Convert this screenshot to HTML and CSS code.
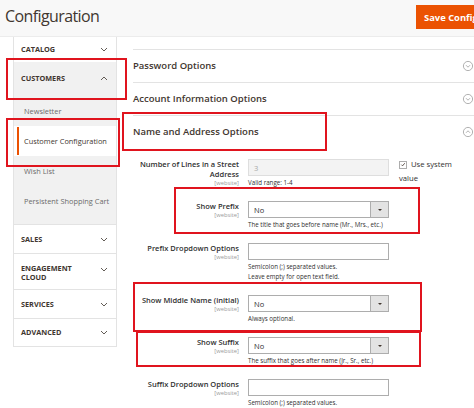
FILE: index.html
```html
<!DOCTYPE html>
<html lang="en">
<head>
<meta charset="utf-8">
<title>Configuration</title>
<link rel="stylesheet" href="styles.css">
</head>
<body>
<div class="page">
  <header class="top">
    <h1 class="title">Configuration</h1>
    <button class="save" type="button">Save Config</button>
  </header>
  <div class="layout">
    <nav class="side">
      <div class="tab tab-first"><span class="tab-label">CATALOG</span><svg class="chev" viewBox="0 0 8 5"><path d="M1 1 L4 4 L7 1"/></svg></div>
      <div class="group">
        <div class="tab tab-open"><span class="tab-label">CUSTOMERS</span><svg class="chev" viewBox="0 0 8 5"><path d="M1 4 L4 1 L7 4"/></svg></div>
        <ul class="sub">
          <li class="sub-item"><span class="sub-link">Newsletter</span></li>
          <li class="sub-item active"><span class="sub-link">Customer Configuration</span></li>
          <li class="sub-item"><span class="sub-link">Wish List</span></li>
          <li class="sub-item"><span class="sub-link">Persistent Shopping Cart</span></li>
        </ul>
      </div>
      <div class="tab"><span class="tab-label">SALES</span><svg class="chev" viewBox="0 0 8 5"><path d="M1 1 L4 4 L7 1"/></svg></div>
      <div class="tab tab-tall"><span class="tab-label">ENGAGEMENT<br>CLOUD</span><svg class="chev chev-top" viewBox="0 0 8 5"><path d="M1 1 L4 4 L7 1"/></svg></div>
      <div class="tab"><span class="tab-label">SERVICES</span><svg class="chev" viewBox="0 0 8 5"><path d="M1 1 L4 4 L7 1"/></svg></div>
      <div class="tab tab-last"><span class="tab-label">ADVANCED</span><svg class="chev" viewBox="0 0 8 5"><path d="M1 1 L4 4 L7 1"/></svg></div>
    </nav>
    <main class="main">
      <section class="sec">
        <div class="sec-head"><span>Password Options</span><svg class="circ" viewBox="0 0 12 12"><circle cx="6" cy="6" r="4.6"/><path d="M4 5.2 L6 7.2 L8 5.2"/></svg></div>
      </section>
      <section class="sec">
        <div class="sec-head"><span>Account Information Options</span><svg class="circ" viewBox="0 0 12 12"><circle cx="6" cy="6" r="4.6"/><path d="M4 5.2 L6 7.2 L8 5.2"/></svg></div>
      </section>
      <section class="sec sec-open">
        <div class="sec-head"><span>Name and Address Options</span><svg class="circ" viewBox="0 0 12 12"><circle cx="6" cy="6" r="4.6"/><path d="M4 6.8 L6 4.8 L8 6.8"/></svg></div>
        <div class="fields">
          <div class="row">
            <div class="label">Number of Lines in a Street<br>Address<span class="scope">[website]</span></div>
            <div class="ctl">
              <div class="input disabled">3</div>
              <div class="note">Valid range: 1-4</div>
            </div>
            <div class="usesys"><span class="cb"><svg viewBox="0 0 8 8"><path d="M1.8 4.2 L3.4 5.8 L6.3 2.3"/></svg></span>Use system value</div>
          </div>
          <div class="row">
            <div class="label">Show Prefix<span class="scope">[website]</span></div>
            <div class="ctl">
              <div class="select"><span class="sel-val">No</span><span class="sel-btn"><i class="tri"></i></span></div>
              <div class="note">The title that goes before name (Mr., Mrs., etc.)</div>
            </div>
          </div>
          <div class="row">
            <div class="label">Prefix Dropdown Options<span class="scope">[website]</span></div>
            <div class="ctl">
              <div class="input"></div>
              <div class="note">Semicolon (;) separated values.<br>Leave empty for open text field.</div>
            </div>
          </div>
          <div class="row">
            <div class="label">Show Middle Name (initial)<span class="scope">[website]</span></div>
            <div class="ctl">
              <div class="select"><span class="sel-val">No</span><span class="sel-btn"><i class="tri"></i></span></div>
              <div class="note">Always optional.</div>
            </div>
          </div>
          <div class="row">
            <div class="label">Show Suffix<span class="scope">[website]</span></div>
            <div class="ctl">
              <div class="select"><span class="sel-val">No</span><span class="sel-btn"><i class="tri"></i></span></div>
              <div class="note">The suffix that goes after name (Jr., Sr., etc.)</div>
            </div>
          </div>
          <div class="row">
            <div class="label">Suffix Dropdown Options<span class="scope">[website]</span></div>
            <div class="ctl">
              <div class="input"></div>
              <div class="note">Semicolon (;) separated values.<br>Leave empty for open text field.</div>
            </div>
          </div>
        </div>
      </section>
    </main>
  </div>
  <div class="mark mark-customers"></div>
  <div class="mark mark-config"></div>
  <div class="mark mark-name"></div>
  <div class="mark mark-prefix"></div>
  <div class="mark mark-middle"></div>
  <div class="mark mark-suffix"></div>
</div>
</body>
</html>
```
FILE: styles.css
```css
html, body {
  margin: 0;
  padding: 0;
  background: #ffffff;
  overflow: hidden;
}
body {
  font-family: "Open Sans", "Noto Sans", "DejaVu Sans", sans-serif;
  color: #303030;
}
.page {
  position: relative;
  width: 474px;
  height: 408px;
  overflow: hidden;
}
.top {
  display: flex;
  align-items: flex-start;
  height: 37px;
  background: #f8f8f8;
  border-bottom: 1px solid #ececec;
  box-sizing: border-box;
}
.title {
  flex: 1;
  margin: 0;
  padding: 5px 0 0 5px;
  font-size: 16px;
  font-weight: 400;
  letter-spacing: -0.6px;
  line-height: 22px;
  color: #41362f;
}
.save {
  flex-shrink: 0;
  width: 72px;
  height: 24px;
  margin: 5px -14px 0 0;
  padding: 0 0 0 8px;
  border: 0;
  background: #eb5202;
  color: #ffffff;
  font-family: inherit;
  font-size: 9.4px;
  font-weight: 700;
  text-align: left;
}
.layout {
  display: flex;
  align-items: flex-start;
}
.side {
  width: 104px;
  margin-left: 13px;
  border-left: 1px solid #e3e3e3;
  border-right: 1px solid #e3e3e3;
  border-bottom: 1px solid #e3e3e3;
  box-sizing: border-box;
  background: #ffffff;
}
.tab {
  display: flex;
  align-items: center;
  height: 29px;
  padding: 0 8px 0 7px;
  border-top: 1px solid #e3e3e3;
  box-sizing: border-box;
  font-size: 7.3px;
  font-weight: 700;
  color: #41362f;
  line-height: 9px;
}
.tab-first {
  height: 25px;
  border-top: 0;
}
.tab-tall {
  height: 36px;
  align-items: flex-start;
  padding-top: 10px;
}
.tab-last {
  height: 28px;
}
.tab-label {
  flex: 1;
}
.chev {
  width: 8px;
  height: 5px;
  fill: none;
  stroke: #514943;
  stroke-width: 0.9;
}
.chev-top {
  margin-top: 3px;
}
.group {
  background: #f1f1f1;
  padding-bottom: 8px;
}
.tab-open {
  height: 31px;
  border-top: 0;
  padding-top: 1px;
}
.sub {
  list-style: none;
  margin: 0;
  padding: 3px 0 0 0;
}
.sub-item {
  height: 30px;
  padding-left: 10px;
  display: flex;
  font-size: 7.4px;
  color: #6b6b6b;
}
.sub-link {
  display: flex;
  align-items: center;
  flex: 1;
}
.sub-item.active {
  background: #ffffff;
  padding-left: 3px;
  padding-top: 1px;
  padding-bottom: 1px;
  box-sizing: border-box;
  color: #41362f;
}
.sub-item.active .sub-link {
  border-left: 2px solid #eb5202;
  padding-left: 5px;
}
.main {
  flex: 1;
  margin-left: 16px;
  padding-top: 12px;
}
.sec {
  border-top: 1px solid #e3e3e3;
}
.sec-head {
  display: flex;
  align-items: center;
  height: 32px;
  padding-bottom: 1px;
  box-sizing: border-box;
  font-size: 9.5px;
  font-weight: 600;
  color: #41362f;
}
.sec-head span {
  flex: 1;
}
.circ {
  width: 12px;
  height: 12px;
  margin-right: 0;
  fill: none;
  stroke: #9e9e9e;
  stroke-width: 0.8;
}
.fields {
  padding-top: 11px;
}
.row {
  display: flex;
  align-items: flex-start;
  margin-bottom: 13px;
}
.label {
  width: 106px;
  text-align: right;
  font-size: 7.5px;
  font-weight: 600;
  line-height: 10px;
  color: #303030;
}
.scope {
  display: block;
  font-size: 5.8px;
  font-weight: 400;
  line-height: 8px;
  color: #9a9a9a;
}
.ctl {
  width: 141px;
  margin-left: 9px;
}
.input,
.select {
  display: flex;
  align-items: center;
  height: 17px;
  border: 1px solid #adadad;
  box-sizing: border-box;
  background: #ffffff;
  font-size: 7.5px;
  padding-left: 5px;
  color: #303030;
}
.input.disabled {
  background: #f3f3f3;
  border-color: #dedede;
  color: #a8a8a8;
}
.select {
  padding-left: 0;
}
.sel-val {
  flex: 1;
  padding-left: 5px;
}
.sel-btn {
  display: flex;
  align-items: center;
  justify-content: center;
  width: 17px;
  align-self: stretch;
  background: #e3e3e3;
  border-left: 1px solid #adadad;
}
.tri {
  width: 0;
  height: 0;
  border-left: 2px solid transparent;
  border-right: 2px solid transparent;
  border-top: 2.5px solid #41362f;
}
.note {
  margin-top: 2px;
  font-size: 6.2px;
  line-height: 10px;
  color: #303030;
}
.usesys {
  width: 60px;
  margin-left: 10px;
  margin-top: -2px;
  font-size: 7.7px;
  line-height: 14px;
  color: #303030;
}
.cb {
  display: inline-flex;
  align-items: center;
  justify-content: center;
  width: 8px;
  height: 8px;
  margin-right: 4px;
  border: 1px solid #adadad;
  box-sizing: border-box;
  vertical-align: -1px;
  background: #ffffff;
}
.cb svg {
  width: 7px;
  height: 7px;
  fill: none;
  stroke: #41362f;
  stroke-width: 1.1;
}
.mark {
  position: absolute;
  border: 2px solid #e0141e;
  box-sizing: border-box;
}
.mark-customers { left: 6px; top: 58px; width: 121px; height: 42px; }
.mark-config { left: 6px; top: 118px; width: 114px; height: 49px; }
.mark-name { left: 122px; top: 112px; width: 205px; height: 39px; }
.mark-prefix { left: 174px; top: 187px; width: 246px; height: 47px; }
.mark-middle { left: 133px; top: 282px; width: 289px; height: 50px; }
.mark-suffix { left: 136px; top: 331px; width: 285px; height: 36px; }
```
